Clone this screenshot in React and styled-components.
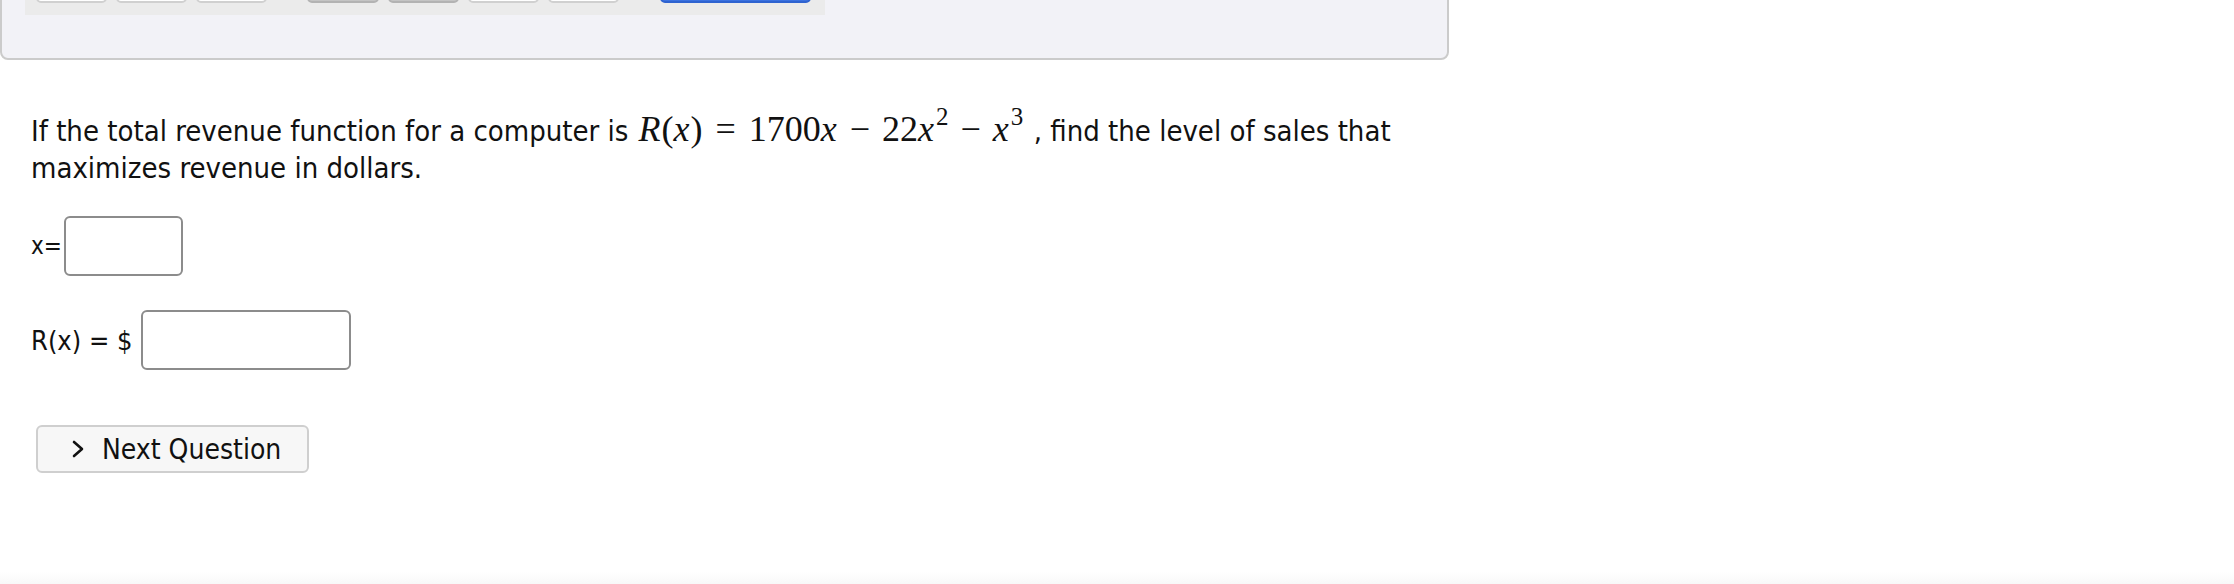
import React from "react";
import styled, { createGlobalStyle } from "styled-components";

const Global = createGlobalStyle`
  html, body { margin: 0; padding: 0; background: #fff; }
  body {
    font-family: "DejaVu Sans Condensed", "DejaVu Sans", sans-serif;
    font-stretch: semi-condensed;
    color: #111;
    overflow: hidden;
  }
`;

const Page = styled.div`
  display: flex;
  flex-direction: column;
  min-height: 584px;
  height: 584px;
  overflow: hidden;
`;

const Panel = styled.div`
  box-sizing: border-box;
  width: 1449px;
  margin-top: -45px;
  padding: 0 0 43px 23px;
  background: #f2f2f7;
  border: 2px solid #cbcbcb;
  border-radius: 8px;
`;

const Toolbar = styled.div`
  box-sizing: border-box;
  width: 800px;
  display: flex;
  align-items: center;
  padding: 8px 11px 12px;
  background: #ebebeb;
`;

const ToolGroup = styled.div`
  display: flex;
  gap: 9px;
  margin-right: ${(p) => p.$after || 9}px;
`;

const ToolButton = styled.div`
  box-sizing: border-box;
  width: ${(p) => p.$w || 71}px;
  height: 38px;
  border-radius: 5px;
  border: 2px solid
    ${(p) => (p.$kind === "dark" ? "#b3b3b3" : p.$kind === "blue" ? "#2f63d0" : "#d0d0d0")};
  background: ${(p) =>
    p.$kind === "dark" ? "#c4c4c4" : p.$kind === "blue" ? "#3b72e0" : "#ffffff"};
`;

const Question = styled.section`
  padding: 51px 0 0 31px;
  font-size: 29px;
`;

const Prompt = styled.p`
  margin: 0;
  width: 1390px;
  line-height: 37px;
`;

const MathExpr = styled.span`
  font-family: "Liberation Serif", "DejaVu Serif", serif;
  font-stretch: normal;
  font-size: 36px;
  white-space: nowrap;
  margin: 0 2px 0 10px;
`;

const MI = styled.i`
  font-style: italic;
  margin-right: 1px;
`;

const MO = styled.span`
  margin: 0 ${(p) => p.$space || 0}px;
`;

const Sup = styled.sup`
  font-size: 25px;
  vertical-align: 16px;
  line-height: 0;
  margin-left: 1px;
`;

const AnswerRow = styled.div`
  display: flex;
  align-items: center;
  margin-top: ${(p) => p.$top}px;
  font-size: ${(p) => p.$size || 28}px;
`;

const Label = styled.span`
  margin-right: ${(p) => p.$gap || 0}px;
  white-space: pre;
`;

const AnswerBox = styled.input`
  box-sizing: border-box;
  width: ${(p) => p.$w}px;
  height: 60px;
  border: 2px solid #8c8c8c;
  border-radius: 6px;
  background: #fff;
  outline: none;
  font-size: 26px;
  padding: 0 8px;
`;

const NextButton = styled.button`
  box-sizing: border-box;
  display: flex;
  align-items: center;
  width: 273px;
  height: 48px;
  margin: 55px 0 0 36px;
  padding: 0 0 0 33px;
  border: 2px solid #cfcfcf;
  border-radius: 6px;
  background: #f7f7f7;
  font-family: inherit;
  font-stretch: inherit;
  font-size: 28px;
  color: #111;
  cursor: pointer;
`;

const Chevron = styled.svg`
  width: 14px;
  height: 20px;
  margin-right: 17px;
  flex: none;
`;

const Spacer = styled.div`
  flex: 1;
`;

const Footer = styled.div`
  height: 12px;
  background: linear-gradient(#ffffff, #f8f8f8);
`;

export default function App() {
  return (
    <>
      <Global />
      <Page>
        <Panel>
          <Toolbar>
            <ToolGroup $after={40}>
              <ToolButton />
              <ToolButton />
              <ToolButton />
            </ToolGroup>
            <ToolGroup>
              <ToolButton $kind="dark" $w={72} />
              <ToolButton $kind="dark" />
            </ToolGroup>
            <ToolGroup $after={41}>
              <ToolButton />
              <ToolButton />
            </ToolGroup>
            <ToolButton $kind="blue" $w={151} />
          </Toolbar>
        </Panel>

        <Question>
          <Prompt>
            If the total revenue function for a computer is
            <MathExpr>
              <MI>R</MI>(<MI>x</MI>)<MO $space={13}>=</MO>1700<MI>x</MI>
              <MO $space={12}>−</MO>22<MI>x</MI>
              <Sup>2</Sup>
              <MO $space={12}>−</MO>
              <MI>x</MI>
              <Sup>3</Sup>
            </MathExpr>{" "}
            , find the level of sales that maximizes revenue in dollars.
          </Prompt>

          <AnswerRow $top={29} $size={24}>
            <Label $gap={2}>x=</Label>
            <AnswerBox $w={119} aria-label="x" />
          </AnswerRow>

          <AnswerRow $top={34} $size={27}>
            <Label $gap={9}>R(x) = $</Label>
            <AnswerBox $w={210} aria-label="R(x)" />
          </AnswerRow>
        </Question>

        <NextButton type="button">
          <Chevron viewBox="0 0 14 20">
            <polyline
              points="3,3 11,10 3,17"
              fill="none"
              stroke="#111"
              strokeWidth="2.6"
              strokeLinecap="round"
              strokeLinejoin="round"
            />
          </Chevron>
          Next Question
        </NextButton>

        <Spacer />
        <Footer />
      </Page>
    </>
  );
}
